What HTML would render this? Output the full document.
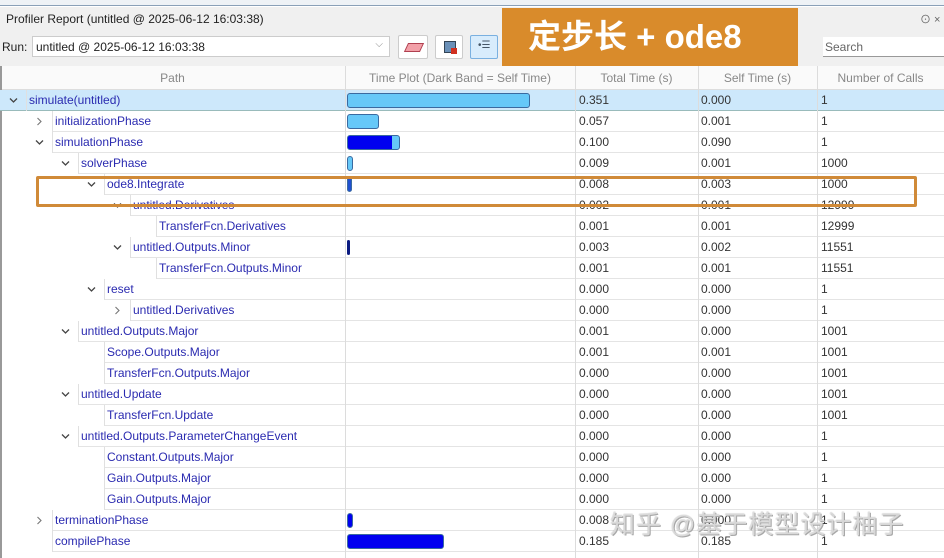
<!DOCTYPE html>
<html><head><meta charset="utf-8"><style>
*{margin:0;padding:0;box-sizing:border-box}
body{width:944px;height:558px;overflow:hidden;background:#fff;font-family:"Liberation Sans","Noto Sans CJK SC",sans-serif;font-size:12px;position:relative}
.a{position:absolute}
.row{position:absolute;left:0;width:944px;height:21px}
.ln{position:absolute;bottom:0;right:0;height:1px;background:#e4e4e4}
.p{position:absolute;top:0;height:21px;line-height:21px;color:#2a2ab0;border-left:1px solid #e0e0e0;padding-left:2px;right:599px}
.ch{position:absolute;top:6px;width:9px;height:9px}
.n{position:absolute;top:0;line-height:21px;color:#333}
.col{position:absolute;top:66px;bottom:0;width:1px;background:#dcdcdc}
.bar{position:absolute;top:3px;height:15px;border:1px solid #3a6aa0;border-radius:3px;background:#66c8f8}
</style></head><body>
<div class="a" style="left:0;top:0;width:944px;height:6px;background:#eef2f6;border-bottom:1px solid #8aa0b8"></div>
<div class="a" style="left:0;top:7px;width:944px;height:59px;background:#f0f0f0"></div>
<div class="a" style="left:6px;top:12px;color:#222">Profiler Report (untitled @ 2025-06-12 16:03:38)</div>
<div class="a" style="left:2px;top:40px;color:#222">Run:</div>
<div class="a" style="left:32px;top:36px;width:358px;height:21px;background:#fff;border:1px solid #ccc;padding:3px 3px;color:#222">untitled @ 2025-06-12 16:03:38<span style="position:absolute;right:6px;top:2px;color:#888;font-size:10px">⌵</span></div>
<div class="a" style="left:398px;top:35px;width:30px;height:24px;background:#fff;border:1px solid #ccc;border-radius:2px"><div class="a" style="left:7px;top:7px;width:16px;height:9px;background:#f2a0a8;border:1px solid #b04050;transform:skewX(-25deg)"></div></div>
<div class="a" style="left:435px;top:35px;width:28px;height:24px;background:#fff;border:1px solid #ccc;border-radius:2px"><div class="a" style="left:8px;top:5px;width:12px;height:12px;background:#6a90b8;border:1px solid #345"></div><div class="a" style="left:15px;top:12px;width:6px;height:6px;background:#d03020"></div></div>
<div class="a" style="left:470px;top:35px;width:28px;height:24px;background:#d8ecfc;border:1px solid #7ab0e0;border-radius:2px;color:#456;font-size:10px;padding:4px 7px">•☰</div>
<div class="a" style="left:502px;top:8px;width:296px;height:58px;background:#d98b2b;color:#fff;font-size:33px;font-weight:bold;line-height:58px;padding-left:26px">定步长 + ode8</div>
<div class="a" style="left:920px;top:11px;color:#666;font-size:11px">⊙ ×</div>
<div class="a" style="left:823px;top:37px;width:121px;height:20px;background:#fff;border-bottom:1px solid #999;color:#666;padding:3px 2px">Search</div>
<div class="a" style="left:0;top:66px;width:944px;height:24px;background:#fafafa;border-bottom:1px solid #ddd"></div>
<div class="a" style="left:0;top:71px;width:345px;text-align:center;color:#888">Path</div>
<div class="a" style="left:345px;top:71px;width:230px;text-align:center;color:#888">Time Plot (Dark Band = Self Time)</div>
<div class="a" style="left:575px;top:71px;width:123px;text-align:center;color:#888">Total Time (s)</div>
<div class="a" style="left:698px;top:71px;width:119px;text-align:center;color:#888">Self Time (s)</div>
<div class="a" style="left:817px;top:71px;width:127px;text-align:center;color:#888">Number of Calls</div>
<div class="a" style="left:0;top:66px;width:2px;bottom:0;background:#999"></div>
<div id="rows"></div>
<div class="col" style="left:345px"></div><div class="col" style="left:575px"></div><div class="col" style="left:698px"></div><div class="col" style="left:817px"></div>
<div class="a" style="left:36px;top:176px;width:881px;height:31px;border:3px solid #d08a38;border-radius:2px"></div>
<div class="a" style="left:610px;top:505px;font-size:25px;color:rgba(255,255,255,0.6);text-shadow:0 0 1px #999,1px 1px 0 #aaa;letter-spacing:1px">知乎 @基于模型设计柚子</div>
<script>
var R=[[0,"simulate(untitled)","v","0.351","0.000","1"],[1,"initializationPhase",">","0.057","0.001","1"],[1,"simulationPhase","v","0.100","0.090","1"],[2,"solverPhase","v","0.009","0.001","1000"],[3,"ode8.Integrate","v","0.008","0.003","1000"],[4,"untitled.Derivatives","v","0.002","0.001","12999"],[5,"TransferFcn.Derivatives","","0.001","0.001","12999"],[4,"untitled.Outputs.Minor","v","0.003","0.002","11551"],[5,"TransferFcn.Outputs.Minor","","0.001","0.001","11551"],[3,"reset","v","0.000","0.000","1"],[4,"untitled.Derivatives",">","0.000","0.000","1"],[2,"untitled.Outputs.Major","v","0.001","0.000","1001"],[3,"Scope.Outputs.Major","","0.001","0.001","1001"],[3,"TransferFcn.Outputs.Major","","0.000","0.000","1001"],[2,"untitled.Update","v","0.000","0.000","1001"],[3,"TransferFcn.Update","","0.000","0.000","1001"],[2,"untitled.Outputs.ParameterChangeEvent","v","0.000","0.000","1"],[3,"Constant.Outputs.Major","","0.000","0.000","1"],[3,"Gain.Outputs.Major","","0.000","0.000","1"],[3,"Gain.Outputs.Major","","0.000","0.000","1"],[1,"terminationPhase",">","0.008","0.000","1"],[1,"compilePhase","","0.185","0.185","1"]];
var B={0:'<div class="bar" style="left:347px;width:183px"></div>',1:'<div class="bar" style="left:347px;width:32px"></div>',2:'<div class="bar" style="left:347px;width:53px;background:linear-gradient(90deg,#0000f0 0 44px,#66c8f8 44px)"></div>',3:'<div class="bar" style="left:347px;width:6px"></div>',4:'<div class="bar" style="left:347px;width:5px;background:#2050d0"></div>',7:'<div class="bar" style="left:347px;width:3px;background:#0a1a80;border-color:#0a1a80"></div>',20:'<div class="bar" style="left:347px;width:6px;background:#0000f0"></div>',21:'<div class="bar" style="left:347px;width:97px;background:#0000f0"></div>'};
var DN='<svg class="ch" viewBox="0 0 9 9" style="left:LEFTpx"><polyline points="1,2.5 4.5,6 8,2.5" fill="none" stroke="#444" stroke-width="1.3"/></svg>';
var RT='<svg class="ch" viewBox="0 0 9 9" style="left:LEFTpx"><polyline points="2.5,1 6,4.5 2.5,8" fill="none" stroke="#777" stroke-width="1.1"/></svg>';
var h="";R.forEach(function(r,i){var x=29+26*r[0];var t=90+21*i;
h+='<div class="row" style="top:'+t+'px;'+(i==0?'background:#cde8fb;':'')+'"><div class="ln" style="left:'+(i==0?0:x-3)+'px;'+(i==0?'background:#9bb':'')+'"></div>';
if(r[2])h+=(r[2]=='v'?DN:RT).replace('LEFT',x-20);
h+='<div class="p" style="left:'+(x-3)+'px">'+r[1]+'</div>'+(B[i]||'');
h+='<div class="n" style="left:579px">'+r[3]+'</div><div class="n" style="left:701px">'+r[4]+'</div><div class="n" style="left:821px">'+r[5]+'</div></div>';});
document.getElementById('rows').innerHTML=h;
</script>
</body></html>
